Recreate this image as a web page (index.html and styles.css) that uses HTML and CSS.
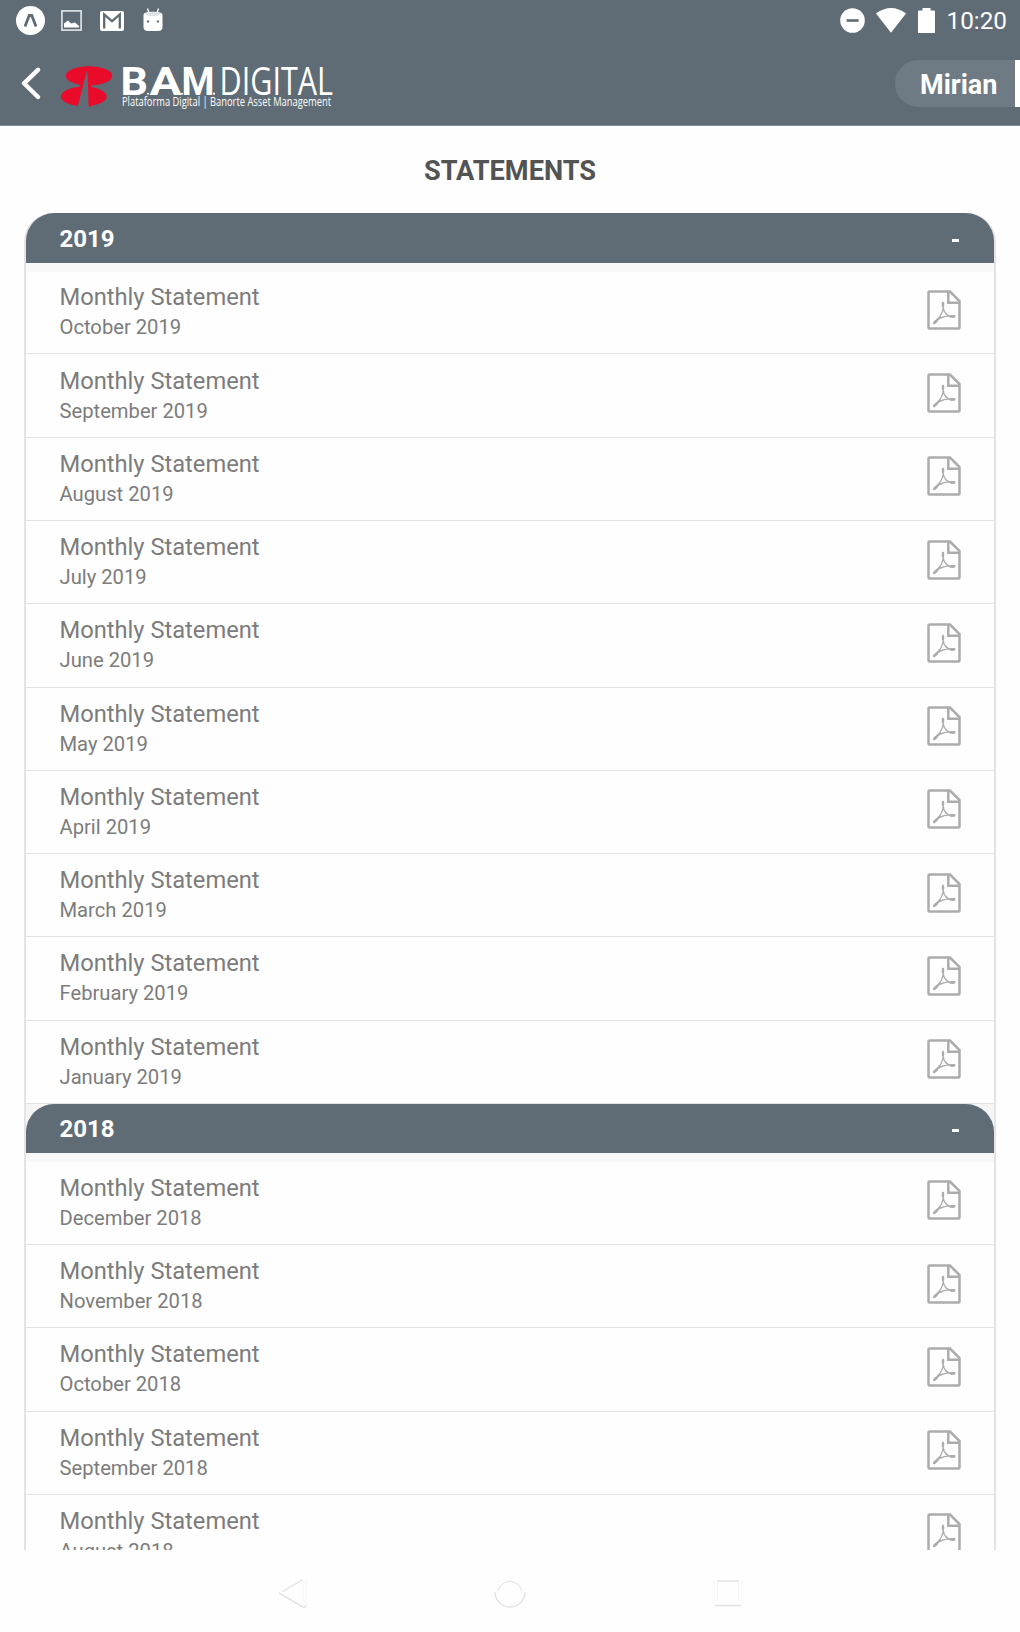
FILE: index.html
```html
<!DOCTYPE html>
<html lang="en">
<head>
    <meta charset="UTF-8">
    <meta name="viewport" content="width=device-width, initial-scale=1.0">
    <title>B.A.M. Digital - Statements</title>
    <link rel="stylesheet" href="styles.css">
</head>
<body>
    <!-- Shared icon for every statement row -->
    <svg class="sprite" xmlns="http://www.w3.org/2000/svg">
        <symbol id="pdf" viewBox="0 0 34 40">
            <path d="M3 1.5H23L32.5 11V37.5Q32.5 38.5 31.5 38.5H2.5Q1.5 38.5 1.5 37.5V2.5Q1.5 1.5 3 1.5Z" fill="none" stroke="#acacac" stroke-width="2.5"/>
            <path d="M21.3 1.5V12.7H32.5" fill="none" stroke="#acacac" stroke-width="2.5"/>
            <path d="M16 13C15.5 19 18 24 22 26.2C24 27.3 27.5 27.5 27.5 26.3C27.5 25 18 25.8 13.5 28C10 30 8 33.5 7 33C6 32 11 29.5 13 26.5C15.5 22.5 17 18 16 13Z" fill="none" stroke="#acacac" stroke-width="1.4"/>
            <path d="M16 13V16M7.2 33L9.5 31M24.5 26.6L27.3 26.3" fill="none" stroke="#acacac" stroke-width="2.4" stroke-linecap="round"/>
        </symbol>
    </svg>

    <header class="app-header">
        <div class="status-bar">
            <div class="status-icons">
                <svg width="29" height="29" viewBox="0 0 29 29">
                    <circle cx="14.5" cy="14.5" r="14.5" fill="#fff"/>
                    <path d="M9 20.5L13.2 9.5H15.8L20 20.5" fill="none" stroke="#606c75" stroke-width="2.8"/>
                </svg>
                <svg width="21" height="21" viewBox="0 0 21 21">
                    <rect x="0.9" y="0.9" width="19.2" height="19.2" fill="none" stroke="#e4e7e9" stroke-width="1.6"/>
                    <path d="M3 17.5V13.5L7 10.5L10 13.5L14 12.5L18 16V17.5Z" fill="#fff"/>
                </svg>
                <svg width="24" height="20" viewBox="0 0 24 20">
                    <rect width="24" height="20" rx="2" fill="#fff"/>
                    <path d="M4.2 17.5V3.5L12 10.2L19.8 3.5V17.5" fill="none" stroke="#606c75" stroke-width="2.3"/>
                </svg>
                <svg width="20" height="23" viewBox="0 0 20 23">
                    <path d="M4.5 0.5L6 5M15.5 0.5L14 5" stroke="#fff" stroke-width="1.3"/>
                    <path d="M0.5 7Q0.5 3.8 10 3.8T19.5 7V19Q19.5 23 15 23H5Q0.5 23 0.5 19Z" fill="#fff"/>
                    <ellipse cx="10" cy="6" rx="7.5" ry="2" fill="#dfe2e4"/>
                    <path d="M4 13.5H6.2M13.8 13.5H16" stroke="#606c75" stroke-width="2"/>
                </svg>
            </div>
            <div class="status-system">
                <svg width="25" height="25" viewBox="0 0 25 25">
                    <circle cx="12.5" cy="12.5" r="12.3" fill="#fff"/>
                    <rect x="6.6" y="11.2" width="12" height="2.6" fill="#606c75"/>
                </svg>
                <svg class="wifi" width="30" height="25" viewBox="0 0 30 25">
                    <path d="M0 5.5Q15 -5.5 30 5.5L15 24.7Z" fill="#fff"/>
                </svg>
                <svg class="battery" width="17" height="25" viewBox="0 0 17 25">
                    <path d="M4.5 0H12.5V2.5H16A1 1 0 0 1 17 3.5V25H0V3.5A1 1 0 0 1 1 2.5H4.5Z" fill="#fff"/>
                </svg>
                <span class="clock">10:20</span>
            </div>
        </div>

        <div class="nav-bar">
            <svg class="back" width="20" height="33" viewBox="0 0 20 33">
                <path d="M17 2.8L3 16.3L17 30" fill="none" stroke="#fff" stroke-width="4.4" stroke-linecap="round" stroke-linejoin="round"/>
            </svg>
            <svg class="logo" width="276" height="46" viewBox="0 0 276 46">
                <g fill="#ea0a2a">
                    <ellipse cx="29" cy="10.8" rx="23.3" ry="9.6"/>
                    <ellipse cx="23.8" cy="31.4" rx="22.9" ry="9.8"/>
                    <path d="M20 18H31V41.5Q24 42.4 17 41.8Z"/>
                </g>
                <path d="M26.9 5.5L17.3 43H28.6L27.8 12Z" fill="#606c75"/>
                <g fill="#fff">
                    <g class="logo-bold">
                        <text x="60.5" y="29.5" textLength="27.5" lengthAdjust="spacingAndGlyphs">B</text>
                        <text x="89.5" y="29.5" textLength="32" lengthAdjust="spacingAndGlyphs">A</text>
                        <text x="121.5" y="29.5" textLength="33" lengthAdjust="spacingAndGlyphs">M</text>
                    </g>
                    <circle cx="88" cy="28.7" r="1"/>
                    <circle cx="122" cy="28.7" r="1"/>
                    <circle cx="154" cy="28.7" r="1.1"/>
                    <text class="logo-light" x="159.5" y="29.5" textLength="113.5" lengthAdjust="spacingAndGlyphs">DIGITAL</text>
                    <text class="logo-tagline" x="62" y="40.7" textLength="209" lengthAdjust="spacingAndGlyphs">Plataforma Digital | Banorte Asset Management</text>
                </g>
            </svg>
            <div class="user">Mirian</div>
        </div>
    </header>

    <main>
        <h1>STATEMENTS</h1>

        <div class="statements">
            <section>
                <h2 class="year"><span>2019</span><span class="toggle"></span></h2>
                <ul>
                    <li><div><strong>Monthly Statement</strong><small>October 2019</small></div><svg class="pdf"><use href="#pdf"/></svg></li>
                    <li><div><strong>Monthly Statement</strong><small>September 2019</small></div><svg class="pdf"><use href="#pdf"/></svg></li>
                    <li><div><strong>Monthly Statement</strong><small>August 2019</small></div><svg class="pdf"><use href="#pdf"/></svg></li>
                    <li><div><strong>Monthly Statement</strong><small>July 2019</small></div><svg class="pdf"><use href="#pdf"/></svg></li>
                    <li><div><strong>Monthly Statement</strong><small>June 2019</small></div><svg class="pdf"><use href="#pdf"/></svg></li>
                    <li><div><strong>Monthly Statement</strong><small>May 2019</small></div><svg class="pdf"><use href="#pdf"/></svg></li>
                    <li><div><strong>Monthly Statement</strong><small>April 2019</small></div><svg class="pdf"><use href="#pdf"/></svg></li>
                    <li><div><strong>Monthly Statement</strong><small>March 2019</small></div><svg class="pdf"><use href="#pdf"/></svg></li>
                    <li><div><strong>Monthly Statement</strong><small>February 2019</small></div><svg class="pdf"><use href="#pdf"/></svg></li>
                    <li><div><strong>Monthly Statement</strong><small>January 2019</small></div><svg class="pdf"><use href="#pdf"/></svg></li>
                </ul>
            </section>
            <section>
                <h2 class="year"><span>2018</span><span class="toggle"></span></h2>
                <ul>
                    <li><div><strong>Monthly Statement</strong><small>December 2018</small></div><svg class="pdf"><use href="#pdf"/></svg></li>
                    <li><div><strong>Monthly Statement</strong><small>November 2018</small></div><svg class="pdf"><use href="#pdf"/></svg></li>
                    <li><div><strong>Monthly Statement</strong><small>October 2018</small></div><svg class="pdf"><use href="#pdf"/></svg></li>
                    <li><div><strong>Monthly Statement</strong><small>September 2018</small></div><svg class="pdf"><use href="#pdf"/></svg></li>
                    <li><div><strong>Monthly Statement</strong><small>August 2018</small></div><svg class="pdf"><use href="#pdf"/></svg></li>
                </ul>
            </section>
        </div>
    </main>

    <nav class="system-nav">
        <svg width="30" height="32" viewBox="0 0 30 32" fill="none">
            <path d="M4.5 14.5L25 2.5" stroke="#d8d8d8"/>
            <path d="M1 16L25 30Q28 31 28 28" stroke="#dcdcdc" stroke-width="1.3"/>
            <path d="M28 28V2M25 4V24" stroke="#f6f6f6"/>
        </svg>
        <svg class="home" width="32" height="32" viewBox="0 0 32 32" fill="none">
            <path d="M4 14A12.3 12.3 0 0 1 28 14" stroke="#e0e0e0"/>
            <path d="M1 15A15 15 0 0 0 31 15" stroke="#e0e0e0" stroke-width="1.3"/>
        </svg>
        <svg width="30" height="30" viewBox="0 0 30 30" fill="none">
            <path d="M1 2V26Q1 28 3 28H27Q29 28 29 26V2M4.5 4V23M25.5 4V23" stroke="#f4f4f4"/>
            <path d="M4 3H26M2 27.5H28" stroke="#e4e4e4" stroke-width="1.5"/>
        </svg>
    </nav>
</body>
</html>
```
FILE: styles.css
```css
:root {
    --slate: #606c75;
    --slate-light: #6f7b84;
    --text-color: #7c7c7c;
    --line: #e3e3e3;
}

* {
    margin: 0;
    padding: 0;
    box-sizing: border-box;
}

body {
    height: 1632px;
    display: flex;
    flex-direction: column;
    background: #fefefe;
    font-family: Roboto, sans-serif;
    overflow: hidden;
}

svg {
    display: block;
    flex-shrink: 0;
}

.sprite {
    position: absolute;
    width: 0;
    height: 0;
}

.app-header {
    height: 126px;
    flex-shrink: 0;
    background: var(--slate);
    border-bottom: 1px solid #7f8b92;
    color: white;
}

.status-bar {
    height: 41px;
    padding: 0 13px 0 16px;
    display: flex;
    align-items: center;
    justify-content: space-between;
}

.status-icons {
    display: flex;
    align-items: center;
    gap: 18px;
}

.status-icons svg:first-child {
    margin-right: -2px;
}

.status-icons svg:last-child {
    margin-left: 1px;
    margin-bottom: 3px;
}

.status-system {
    display: flex;
    align-items: center;
}

.wifi {
    margin-left: 11px;
}

.battery {
    margin: 0 11px 0 12px;
}

.clock {
    font-size: 24.3px;
    line-height: 40px;
    padding-top: 1px;
}

.nav-bar {
    height: 84px;
    padding-left: 21px;
    display: flex;
    align-items: center;
}

.back {
    margin-right: 19px;
}

.logo {
    margin-top: 10px;
    overflow: visible;
}

.logo-bold {
    font-size: 38px;
    font-weight: 700;
}

.logo-light {
    font-family: "Open Sans", sans-serif;
    font-size: 37.5px;
}

.logo-tagline {
    font-family: "Open Sans", sans-serif;
    font-size: 12px;
}

.user {
    width: 125px;
    height: 47px;
    margin-left: auto;
    padding-left: 25px;
    line-height: 51px;
    background: var(--slate-light);
    border-right: 5px solid white;
    border-radius: 24px 0 0 24px;
    font-size: 27px;
    font-weight: 700;
}

main {
    height: 1424px;
    flex-shrink: 0;
    padding: 0 24px;
    overflow: hidden;
}

h1 {
    height: 87.3px;
    line-height: 91px;
    text-align: center;
    font-size: 27.2px;
    font-weight: 700;
    color: #535353;
}

.statements {
    border: 2px solid var(--line);
    border-top: none;
    border-radius: 29px 29px 0 0;
}

section + section {
    background: #f5f5f5;
}

.year {
    height: 49.3px;
    padding: 2px 35px 0 33.5px;
    display: flex;
    align-items: center;
    justify-content: space-between;
    background: var(--slate);
    border-radius: 28px 28px 0 0;
    color: white;
    font-size: 24px;
    font-weight: 700;
}

.toggle {
    width: 7px;
    height: 3px;
    margin-top: 3px;
    background: white;
}

ul {
    list-style: none;
    padding-top: 8.6px;
    background: linear-gradient(#f8f8f8 8.6px, #fefefe 8.6px);
}

li {
    height: 83.27px;
    padding: 0 33px 0 33.5px;
    display: flex;
    align-items: center;
    justify-content: space-between;
    border-bottom: 1px solid var(--line);
    color: var(--text-color);
}

li strong,
li small {
    display: block;
    font-weight: 400;
    line-height: 30px;
}

li strong {
    font-size: 23.7px;
}

li small {
    font-size: 20.2px;
}

.pdf {
    width: 34px;
    height: 40px;
    margin-top: -5px;
}

.system-nav {
    height: 82px;
    padding: 4px 277px 0 278px;
    display: flex;
    align-items: center;
    justify-content: space-between;
}

.home {
    margin-right: 2px;
}
```
